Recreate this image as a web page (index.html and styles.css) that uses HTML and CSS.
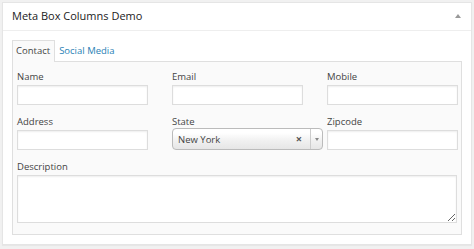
FILE: index.html
```html
<!DOCTYPE html>
<html>
<head>
<meta charset="utf-8">
<link rel="stylesheet" href="styles.css">
</head>
<body>
<div class="postbox">
  <div class="hndle">
    <h3 class="title">Meta Box Columns Demo</h3>
    <span class="toggle"></span>
  </div>
  <div class="inside">
    <ul class="tabs">
      <li class="tab active">Contact</li>
      <li class="tab">Social Media</li>
    </ul>
    <div class="panel">
      <div class="grid">
        <div class="field">
          <label class="lbl">Name</label>
          <input class="inp" type="text">
        </div>
        <div class="field">
          <label class="lbl">Email</label>
          <input class="inp" type="text">
        </div>
        <div class="field">
          <label class="lbl">Mobile</label>
          <input class="inp" type="text">
        </div>
        <div class="field">
          <label class="lbl">Address</label>
          <input class="inp" type="text">
        </div>
        <div class="field">
          <label class="lbl">State</label>
          <div class="select">
            <span class="sel-text">New York</span>
            <span class="sel-clear">×</span>
            <span class="sel-arrow"><span class="caret"></span></span>
          </div>
        </div>
        <div class="field">
          <label class="lbl">Zipcode</label>
          <input class="inp" type="text">
        </div>
        <div class="field wide">
          <label class="lbl">Description</label>
          <textarea class="txt"></textarea>
        </div>
      </div>
    </div>
  </div>
</div>
</body>
</html>
```

FILE: styles.css
```css
* { box-sizing: border-box; }
html, body { margin: 0; padding: 0; }
body {
  background: #f1f1f1;
  font-family: "Open Sans", "Liberation Sans", sans-serif;
  color: #444;
}
.postbox {
  margin: 2px;
  height: 243px;
  background: #fff;
  border: 1px solid #e5e5e5;
  box-shadow: 0 1px 1px rgba(0,0,0,0.04);
}
.hndle {
  height: 28px;
  border-bottom: 1px solid #eee;
  display: flex;
  align-items: center;
  justify-content: space-between;
  padding: 0 9px 0 9px;
}
.title {
  margin: 0;
  font-size: 11px;
  font-weight: 400;
  color: #222;
  line-height: 14px;
  padding-bottom: 1px;
}
.toggle {
  width: 0; height: 0;
  border-left: 3px solid transparent;
  border-right: 3px solid transparent;
  border-bottom: 4px solid #999;
  margin-right: 1px;
  margin-top: -2px;
}
.inside {
  padding: 9px 9px 9px 9px;
}
.tabs {
  list-style: none;
  margin: 0;
  padding: 0;
  display: flex;
  align-items: flex-end;
  height: 21px;
}
.tab {
  font-size: 9.5px;
  line-height: 20px;
  padding: 0 4px 0 3px;
  color: #2a7fb5;
  border: 1px solid transparent;
  border-bottom: none;
}
.tab.active {
  color: #444;
  background: #fafafa;
  border-color: #dfdfdf;
  position: relative;
  z-index: 1;
  height: 22px;
  margin-bottom: -1px;
}
.panel {
  background: #fafafa;
  border: 1px solid #dfdfdf;
  padding: 8px 4px 10px 4px;
  height: 174px;
}
.grid {
  display: grid;
  grid-template-columns: 131px 131px 131px;
  column-gap: 24px;
  row-gap: 10px;
}
.field { display: flex; flex-direction: column; }
.field.wide { grid-column: 1 / 4; }
.lbl {
  font-size: 9.5px;
  line-height: 13px;
  color: #444;
  margin-bottom: 2px;
}
.inp {
  height: 20px;
  width: 131px;
  border: 1px solid #ddd;
  background: #fff;
  box-shadow: inset 0 1px 2px rgba(0,0,0,0.07);
  margin: 0;
  padding: 0;
}
.txt {
  width: 440px;
  height: 48px;
  border: 1px solid #ddd;
  background: #fff;
  box-shadow: inset 0 1px 2px rgba(0,0,0,0.07);
  margin: 0;
  padding: 0;
  resize: both;
}
.select {
  width: 151px;
  height: 22px;
  margin-top: -2px;
  border: 1px solid #bbb;
  border-radius: 4px;
  background: linear-gradient(#ffffff 20%, #f0f0f0 60%, #e6e6e6 100%);
  display: flex;
  align-items: center;
  font-size: 9.5px;
  color: #444;
}
.sel-text {
  flex: 1;
  padding-left: 5px;
}
.sel-clear {
  font-size: 11px;
  color: #555;
  font-weight: 700;
  margin-right: 8px;
  line-height: 10px;
}
.sel-arrow {
  width: 12px;
  height: 100%;
  border-left: 1px solid #ccc;
  display: flex;
  align-items: center;
  justify-content: center;
}
.caret {
  width: 0; height: 0;
  border-left: 2px solid transparent;
  border-right: 2px solid transparent;
  border-top: 3px solid #888;
}
```
